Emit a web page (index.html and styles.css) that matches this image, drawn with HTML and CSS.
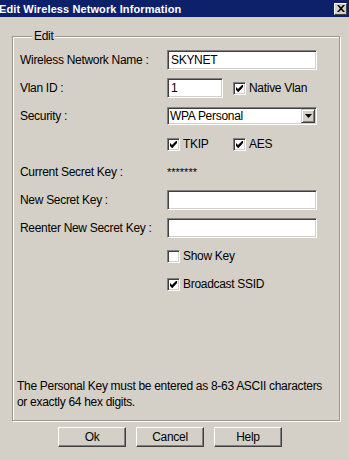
FILE: index.html
```html
<!DOCTYPE html>
<html>
<head>
<meta charset="utf-8">
<link rel="stylesheet" href="styles.css">
</head>
<body>
<div class="window">
  <div class="titlebar">
    <span class="title">Edit Wireless Network Information</span>
    <span class="close"><svg width="8" height="7" viewBox="0 0 8 7"><path d="M0 0h2l2 2.2L6 0h2L5 3.5 8 7H6L4 4.8 2 7H0l3-3.5z" fill="#000"/></svg></span>
  </div>
  <div class="group">
    <span class="legend">Edit</span>
    <div class="rows">
      <div class="row"><span class="label">Wireless Network Name :</span><div class="field wide">SKYNET</div></div>
      <div class="row"><span class="label">Vlan ID :</span>
        <div class="inline"><div class="field short">1</div>
          <span class="check on"><svg width="7" height="7" viewBox="0 0 7 7"><path d="M0 2L2 4 6 0H7V2L2.5 7H2L0 5z" fill="#000"/></svg></span><span class="ctext">Native Vlan</span></div>
      </div>
      <div class="row"><span class="label">Security :</span>
        <div class="select"><span class="seltext">WPA Personal</span><span class="selbtn"><svg width="7" height="4" viewBox="0 0 7 4"><path d="M0 0H7L3.5 4z" fill="#000"/></svg></span></div>
      </div>
      <div class="row"><span class="label"></span>
        <div class="inline">
          <span class="check on"><svg width="7" height="7" viewBox="0 0 7 7"><path d="M0 2L2 4 6 0H7V2L2.5 7H2L0 5z" fill="#000"/></svg></span><span class="ctext tkip">TKIP</span>
          <span class="check on"><svg width="7" height="7" viewBox="0 0 7 7"><path d="M0 2L2 4 6 0H7V2L2.5 7H2L0 5z" fill="#000"/></svg></span><span class="ctext">AES</span>
        </div>
      </div>
      <div class="row"><span class="label">Current Secret Key :</span><span class="stars">*******</span></div>
      <div class="row"><span class="label">New Secret Key :</span><div class="field wide"></div></div>
      <div class="row"><span class="label">Reenter New Secret Key :</span><div class="field wide"></div></div>
      <div class="row"><span class="label"></span>
        <div class="inline"><span class="check"></span><span class="ctext">Show Key</span></div>
      </div>
      <div class="row"><span class="label"></span>
        <div class="inline"><span class="check on"><svg width="7" height="7" viewBox="0 0 7 7"><path d="M0 2L2 4 6 0H7V2L2.5 7H2L0 5z" fill="#000"/></svg></span><span class="ctext">Broadcast SSID</span></div>
      </div>
    </div>
    <p class="note">The Personal Key must be entered as 8-63 ASCII characters<br>or exactly 64 hex digits.</p>
  </div>
  <div class="buttons">
    <div class="btn">Ok</div>
    <div class="btn">Cancel</div>
    <div class="btn">Help</div>
  </div>
</div>
</body>
</html>
```
FILE: styles.css
```css
html, body {
  margin: 0;
  padding: 0;
  background: #d4d0c8;
}
.window {
  width: 349px;
  height: 460px;
  background: #d4d0c8;
  font-family: "Liberation Sans", Arial, sans-serif;
  font-size: 12px;
  letter-spacing: -0.3px;
  color: #000;
  overflow: hidden;
}
.titlebar {
  height: 17px;
  background: #0c2169;
  display: flex;
  align-items: center;
  justify-content: space-between;
  padding-right: 2px;
}
.title {
  color: #fff;
  font-weight: bold;
  font-size: 11px;
  margin-left: -1px;
  letter-spacing: 0.1px;
}
.close {
  width: 13px;
  height: 12px;
  box-sizing: border-box;
  background: #d4d0c8;
  border: 1px solid;
  border-color: #fff #404040 #404040 #fff;
  display: flex;
  align-items: center;
  justify-content: center;
}
.group {
  position: relative;
  margin: 19px 9px 0 12px;
  height: 385px;
  box-sizing: border-box;
  border: 1px solid #9a9893;
  box-shadow: inset 1px 1px 0 #fff, 1px 1px 0 #fff;
  padding: 9px 0 10px 0;
  display: flex;
  flex-direction: column;
}
.legend {
  position: absolute;
  left: 19px;
  top: -9px;
  padding: 0 2px;
  background: #d4d0c8;
  line-height: 16px;
}
.rows {
  padding-left: 7px;
  display: flex;
  flex-direction: column;
}
.row {
  height: 28px;
  display: flex;
  align-items: center;
  white-space: nowrap;
}
.label {
  width: 147px;
  flex: none;
}
.field {
  height: 20px;
  box-sizing: border-box;
  background: #fff;
  border: 1px solid;
  border-color: #808080 #fff #fff #808080;
  box-shadow: inset 1px 1px 0 #404040, inset -1px -1px 0 #d4d0c8;
  padding: 2px 0 0 3px;
  line-height: 15px;
}
.wide { width: 150px; }
.short { width: 56px; margin-right: 10px; }
.inline {
  display: flex;
  align-items: center;
}
.check {
  width: 13px;
  height: 13px;
  box-sizing: border-box;
  background: #fff;
  border: 1px solid;
  border-color: #808080 #fff #fff #808080;
  box-shadow: inset 1px 1px 0 #404040, inset -1px -1px 0 #d4d0c8;
  display: flex;
  align-items: center;
  justify-content: center;
  flex: none;
}
.ctext {
  margin-left: 3px;
}
.tkip {
  width: 50px;
}
.select {
  width: 150px;
  height: 18px;
  box-sizing: border-box;
  background: #fff;
  border: 1px solid;
  border-color: #808080 #fff #fff #808080;
  box-shadow: inset 1px 1px 0 #404040, inset -1px -1px 0 #d4d0c8;
  display: flex;
  align-items: center;
  padding: 1px 1px 1px 2px;
}
.seltext {
  flex: 1;
  line-height: 14px;
}
.selbtn {
  width: 14px;
  height: 14px;
  box-sizing: border-box;
  background: #d4d0c8;
  border: 1px solid;
  border-color: #d4d0c8 #404040 #404040 #d4d0c8;
  box-shadow: inset 1px 1px 0 #fff, inset -1px -1px 0 #808080;
  display: flex;
  align-items: center;
  justify-content: center;
}
.stars {
  font-size: 11px;
  letter-spacing: 0;
}
.note {
  margin: auto 0 0 0;
  padding-left: 4px;
  line-height: 16px;
  white-space: nowrap;
}
.buttons {
  display: flex;
  gap: 10px;
  margin: 6px 0 0 58px;
}
.btn {
  width: 68px;
  height: 20px;
  box-sizing: border-box;
  border: 1px solid;
  border-color: #fff #404040 #404040 #fff;
  box-shadow: inset -1px -1px 0 #808080;
  display: flex;
  align-items: center;
  justify-content: center;
}
```
